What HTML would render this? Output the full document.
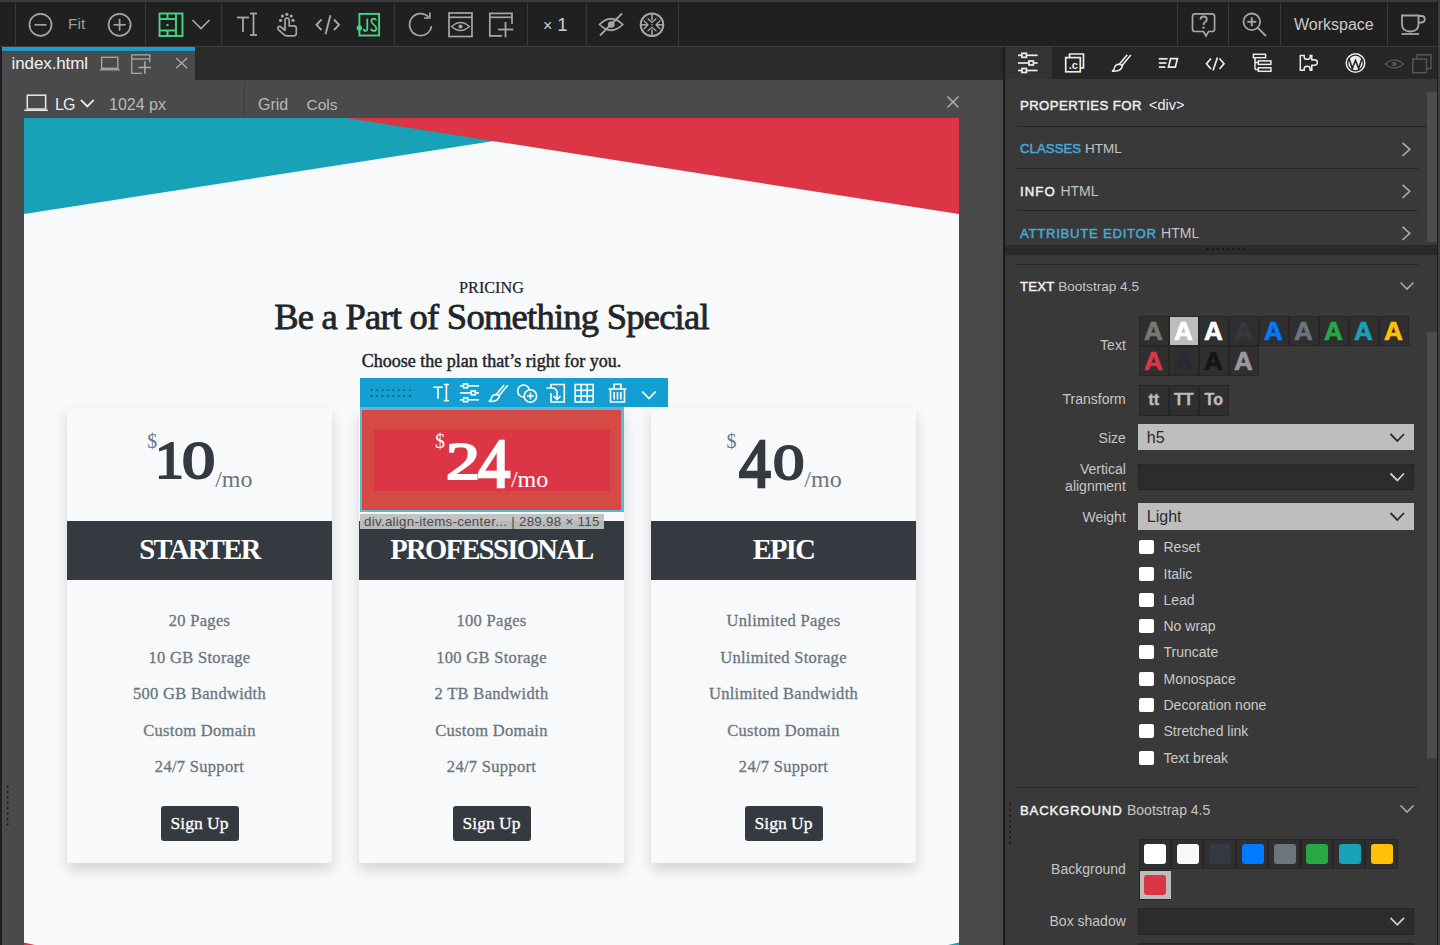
<!DOCTYPE html>
<html><head><meta charset="utf-8">
<style>
*{box-sizing:border-box;margin:0;padding:0}
html,body{width:1440px;height:945px;overflow:hidden;background:#1f1f1f;font-family:"Liberation Sans",sans-serif}
.a{position:absolute}
svg.a{overflow:visible}
#top{left:0;top:0;width:1440px;height:46px;background:#202020;border-top:2px solid #3a3a3a}
.sep{position:absolute;top:2px;width:1px;height:44px;background:#383838}
#topline{left:0;top:46px;width:1440px;height:1px;background:#3c3c3c}
#tabbar{left:2px;top:47px;width:1001px;height:33px;background:#2a2a2a}
#tab{left:2px;top:47px;width:193px;height:33px;background:#4a4a4a;border-top:4px solid #1b9ccf}
#chead{left:2px;top:80px;width:1001px;height:38px;background:#4a4a4a}
#cvbg{left:2px;top:118px;width:1001px;height:827px;background:#4a4a4a}
#canvas{left:24px;top:118px;width:935px;height:827px;background:#f8f9fa;overflow:hidden}
#divider{left:1003px;top:47px;width:2px;height:898px;background:#1a1a1a}
#rp{left:1005px;top:47px;width:435px;height:898px;background:#393939}
#rtabs{left:1005px;top:47px;width:435px;height:32px;background:#262626}

.card{width:265px;height:455px;background:#f8f9fa;border-radius:3px;box-shadow:0 7px 14px rgba(0,0,0,.15)}
.band{width:265px;height:59.5px;background:#343a40;color:#fff;font-family:"Liberation Serif",serif;font-weight:bold;font-size:28.5px;text-align:center;line-height:57px;letter-spacing:-1.6px}
.price{width:265px;height:80px;text-align:center;white-space:nowrap}
.price .dol{font-size:17px;vertical-align:top;position:relative;top:4px}
.price .num{font-size:52px;font-weight:bold;line-height:80px}
.price .mo{font-size:20px}
.feat{width:265px;text-align:center;font-size:16.5px;color:#6c757d;letter-spacing:0.3px;-webkit-text-stroke:0.3px #6c757d}
.btn{width:78px;height:35px;background:#343a40;border-radius:3px;color:#fff;font-size:17.5px;text-align:center;line-height:34px;-webkit-text-stroke:0.3px #fff}

.hd{font-size:13.2px;font-weight:normal;letter-spacing:1.05px;white-space:nowrap;line-height:16px;-webkit-text-stroke:0.45px currentColor;word-spacing:0px}
.hd .lt{font-weight:normal;color:#c4c4c4;letter-spacing:0;margin-left:0px;-webkit-text-stroke:0;font-size:14px}
.hr{left:1016.5px;height:1px;background:#262626}
.cell{width:28px;height:28px;font-weight:bold;font-size:26px;line-height:29px;text-align:center;-webkit-text-stroke:0.7px currentColor}
.tcell{width:28.5px;height:28.5px;background:#2f2f2f;color:#bcbcbc;font-weight:bold;font-size:16px;line-height:28px;text-align:center;-webkit-text-stroke:0.4px #bcbcbc}
.lbl{left:1005px;width:120.8px;text-align:right;font-size:14px;color:#c6c6c6;line-height:16px;margin-top:1px}
.sel{left:1138.3px;width:276px;height:26.4px;font-size:16px;line-height:28px;padding-left:8.5px}
.sel.lite{background:#bebebe;color:#2b2b2b}
.sel.dark{background:#2c2c2c;border:1px solid #252525}
.chk{left:1139px;width:14.6px;height:14px;background:#fff;border-radius:2px}
.clb{left:1163.5px;font-size:14px;color:#c9c9c9;line-height:16px;white-space:nowrap;margin-top:1px}
.dg{font-family:"Liberation Serif",serif;font-size:51.5px;line-height:60px;transform-origin:0 0}
.serif{font-family:"Liberation Serif",serif}
</style></head><body>
<div id="top" class="a"></div>
<div id="topline" class="a"></div>
<div class="a" style="left:0;top:0;width:1440px;height:46px">
<div class="sep" style="left:15px"></div>
<div class="sep" style="left:145px"></div>
<div class="sep" style="left:221px"></div>
<div class="sep" style="left:394px"></div>
<div class="sep" style="left:527px"></div>
<div class="sep" style="left:586px"></div>
<div class="sep" style="left:678px"></div>
<div class="sep" style="left:1177px"></div>
<div class="sep" style="left:1228px"></div>
<div class="sep" style="left:1280px"></div>
<div class="sep" style="left:1387px"></div>
<svg class="a" style="left:0;top:0" width="1440" height="46" fill="none" stroke="#a6a6a6" stroke-width="1.7">
  <circle cx="40.5" cy="24.8" r="11"/>
  <line x1="34.5" y1="24.8" x2="46.5" y2="24.8"/>
  <circle cx="119.6" cy="24.8" r="11"/>
  <line x1="113.6" y1="24.8" x2="125.6" y2="24.8"/>
  <line x1="119.6" y1="18.8" x2="119.6" y2="30.8"/>
  <g stroke="#47d684" stroke-width="1.9">
    <rect x="159.5" y="13.5" width="23" height="22.5"/>
    <line x1="159.5" y1="19" x2="176" y2="19"/>
    <line x1="159.5" y1="30.5" x2="176" y2="30.5"/>
    <line x1="176" y1="13.5" x2="176" y2="36"/>
    <line x1="167.5" y1="14" x2="167.5" y2="19"/>
    <line x1="167.5" y1="30.5" x2="167.5" y2="36"/>
  </g>
  <rect x="166.5" y="24" width="2" height="2" fill="#47d684" stroke="none"/>
  <polyline points="192.5,20 201,28.5 209.5,20"/>
  <g stroke-width="1.8">
  <line x1="237" y1="17.5" x2="249" y2="17.5"/><line x1="243" y1="17.5" x2="243" y2="32"/>
  <line x1="250" y1="13.5" x2="257" y2="13.5"/><line x1="250" y1="35" x2="257" y2="35"/><line x1="253.5" y1="13.5" x2="253.5" y2="35"/>
  </g>
  <path d="M285 31 L285 20.3 A2.1 2.1 0 0 1 289.2 20.3 L289.2 25.8 L294 25.8 Q296.3 25.8 296.3 28.2 L296.3 33.3 Q296.3 35.8 293.8 35.8 L286.8 35.8 Q285.2 35.8 284.2 34.9 L278.4 29.6 Q277.1 28.1 278.4 26.9 Q279.7 25.9 281.1 27 L285 30.5" stroke-width="1.7"/>
  <g fill="#a6a6a6" stroke="none"><circle cx="286.8" cy="14.3" r="1.6"/><circle cx="282.4" cy="16.1" r="1.6"/><circle cx="291.2" cy="16.1" r="1.6"/><circle cx="280.6" cy="20.4" r="1.6"/><circle cx="293" cy="20.4" r="1.6"/></g>
  <polyline points="321.5,19.5 316.5,24.8 321.5,30" stroke-width="1.9"/>
  <polyline points="334,19.5 339,24.8 334,30" stroke-width="1.9"/>
  <line x1="330.5" y1="15.2" x2="325.5" y2="34.2" stroke-width="1.9"/>
  <g stroke="#47d684" stroke-width="1.9">
    <rect x="359.4" y="13.9" width="19.7" height="21.6"/>
  </g>
  <circle cx="359.4" cy="28" r="2.7" fill="#47d684" stroke="none"/>
  <path d="M367.3 18.6 L367.3 28.2 Q367.3 30.9 365.3 30.9 Q363.9 30.9 363.7 28.8" stroke="#4fd68c" stroke-width="1.7"/>
  <path d="M376.2 20.4 Q375.6 18.6 373.7 18.6 Q371.4 18.6 371.4 21 Q371.4 23 373.7 24.6 Q376.3 26.4 376.3 28.4 Q376.3 30.9 373.8 30.9 Q371.5 30.9 371 28.8" stroke="#4fd68c" stroke-width="1.7"/>
  <path d="M431.5 26 A11 11 0 1 1 428.5 17" />
  <polyline points="429.8,12.5 429.8,18 424,18"/>
  <rect x="449" y="13" width="23" height="23.5"/>
  <line x1="449" y1="17.3" x2="472" y2="17.3"/>
  <path d="M451.7 26.5 Q460.5 18.5 469.3 26.5 Q460.5 34.5 451.7 26.5 Z" stroke-width="1.6"/>
  <circle cx="460.5" cy="26.5" r="2.1" fill="#a6a6a6" stroke="none"/>
  <path d="M502 35.8 L489.8 35.8 L489.8 13.3 L512 13.3 L512 24"/>
  <line x1="489.8" y1="17.3" x2="512" y2="17.3"/>
  <line x1="498" y1="29.5" x2="513.3" y2="29.5" stroke-width="1.8"/>
  <line x1="505.5" y1="22" x2="505.5" y2="37.2" stroke-width="1.8"/>
  <line x1="600" y1="35.5" x2="622" y2="13.5" stroke-width="1.8"/>
  <path d="M599.5 24.5 Q611 13 622.8 24.5 Q611 36 599.5 24.5 Z" stroke-width="1.7"/>
  <circle cx="611.3" cy="24.5" r="3.3" fill="#a6a6a6" stroke="none"/>
  <circle cx="652" cy="24.8" r="11.3" stroke-width="2"/>
  <g stroke-width="1.6">
   <line x1="652" y1="14" x2="652" y2="20"/><line x1="652" y1="35.6" x2="652" y2="29.6"/>
   <line x1="641.2" y1="24.8" x2="647.2" y2="24.8"/><line x1="662.8" y1="24.8" x2="656.8" y2="24.8"/>
  </g>
  <g fill="#a6a6a6" stroke="none">
   <path d="M647.6 17.6 L652 21.6 L656.4 17.6 L656.4 19.4 L652 23.2 L647.6 19.4 Z"/>
   <path d="M647.6 32 L652 28 L656.4 32 L656.4 30.2 L652 26.4 L647.6 30.2 Z"/>
   <path d="M644.8 20.4 L648.8 24.8 L644.8 29.2 L643 29.2 L646.8 24.8 L643 20.4 Z"/>
   <path d="M659.2 20.4 L655.2 24.8 L659.2 29.2 L661 29.2 L657.2 24.8 L661 20.4 Z"/>
  </g>
  <circle cx="652" cy="24.8" r="0.8" fill="#a6a6a6" stroke="none"/>
  <path d="M1195 13.8 L1212 13.8 Q1214.6 13.8 1214.6 16.5 L1214.6 29 Q1214.6 31.5 1212 31.5 L1208.5 31.5 L1206 36 L1203.5 31.5 L1195 31.5 Q1192.5 31.5 1192.5 29 L1192.5 16.5 Q1192.5 13.8 1195 13.8 Z" stroke-width="1.7"/>
  <path d="M1200.5 19.5 Q1200.5 16.5 1203.5 16.5 Q1206.8 16.5 1206.8 19.5 Q1206.8 21.5 1204.5 22.5 Q1203.5 23 1203.5 25" stroke-width="1.9"/>
  <circle cx="1203.5" cy="27.6" r="1.2" fill="#a6a6a6" stroke="none"/>
  <circle cx="1251.8" cy="21.8" r="8.3" stroke-width="1.8"/>
  <line x1="1257.8" y1="27.8" x2="1266" y2="36" stroke-width="1.9"/>
  <line x1="1247.3" y1="21.8" x2="1256.3" y2="21.8" stroke-width="1.9"/>
  <line x1="1251.8" y1="17.3" x2="1251.8" y2="26.3" stroke-width="1.9"/>
  <path d="M1402 15.5 L1418.5 15.5 L1418.5 24 Q1418.5 31.5 1410.3 31.5 Q1402 31.5 1402 24 Z" stroke-width="1.8"/>
  <path d="M1418.5 16 L1421.5 16 Q1424.8 16 1424.8 19.3 Q1424.8 22.5 1421.5 22.5 L1418.5 22.5" stroke-width="1.8"/>
  <line x1="1401.5" y1="34" x2="1419" y2="34" stroke-width="1.8"/>
</svg>
<div class="a" style="left:68px;top:15px;font-size:15.5px;color:#9d9d9d">Fit</div>
<div class="a" style="left:543px;top:14.5px;font-size:18.5px;color:#cfcfcf;white-space:nowrap;line-height:20px"><span style="font-size:16px;position:relative;top:0px">&#215;</span><span style="margin-left:5px">1</span></div>
<div class="a" style="left:1294px;top:15.5px;font-size:16px;color:#c9c9c9">Workspace</div>

</div>
<div id="tabbar" class="a"></div>
<div id="tab" class="a"></div>
<div id="chead" class="a"></div>
<div id="cvbg" class="a"></div>

<div class="a" style="left:11.5px;top:53.5px;font-size:17px;color:#f2f2f2;letter-spacing:-0.1px">index.html</div>
<svg class="a" style="left:0;top:46px" width="1003" height="72" fill="none" stroke="#a9a9a9" stroke-width="1.3">
  <rect x="101.6" y="11.3" width="16.2" height="11" />
  <line x1="100" y1="23.8" x2="119.7" y2="23.8"/>
  <path d="M142 27.3 L131.8 27.3 L131.8 8.8 L149.8 8.8 L149.8 16.5"/>
  <line x1="131.8" y1="13" x2="149.8" y2="13"/>
  <line x1="138.5" y1="21.5" x2="151" y2="21.5" stroke-width="1.6"/>
  <line x1="144.9" y1="15.2" x2="144.9" y2="27.8" stroke-width="1.6"/>
  <line x1="176" y1="12" x2="187.3" y2="22.2" stroke-width="1.4"/>
  <line x1="187.3" y1="12" x2="176" y2="22.2" stroke-width="1.4"/>
  <g stroke="#e8e8e8" stroke-width="1.5">
  <rect x="27.3" y="49.2" width="18.3" height="13.8"/>
  <line x1="24.3" y1="64.3" x2="47.9" y2="64.3"/>
  <polyline points="80.8,53.8 87.3,60.5 93.8,53.8" stroke-width="1.8"/>
  </g>
  <line x1="244.5" y1="36" x2="244.5" y2="71" stroke="#3b3b3b" stroke-width="1"/>
  <line x1="947.5" y1="50.5" x2="958.5" y2="61.5" stroke="#b0b0b0" stroke-width="1.4"/>
  <line x1="958.5" y1="50.5" x2="947.5" y2="61.5" stroke="#b0b0b0" stroke-width="1.4"/>
</svg>
<div class="a" style="left:55px;top:95.5px;font-size:16px;color:#ececec;letter-spacing:-0.8px">LG</div>
<div class="a" style="left:109px;top:95.5px;font-size:16px;color:#b9b9b9">1024 px</div>
<div class="a" style="left:258px;top:95.5px;font-size:16px;color:#b9b9b9">Grid</div>
<div class="a" style="left:306.5px;top:95.5px;font-size:15.5px;color:#b9b9b9">Cols</div>

<div id="canvas" class="a">
  <svg class="a" style="left:0;top:0" width="935" height="120">
    <polygon points="0,0 617,0 0,96" fill="#17a2b8"/>
    <polygon points="322,0 935,0 935,96" fill="#dc3545"/>
  </svg>
  <svg class="a" style="left:0;top:820px" width="935" height="7"><polygon points="0,4.5 11,7 0,7" fill="#dc3545"/><polygon points="935,4.5 924,7 935,7" fill="#17a2b8"/></svg>
</div>

<div class="a serif" style="left:24px;width:935px;top:278.5px;text-align:center;font-size:16.2px;color:#212529;-webkit-text-stroke:0.2px #212529">PRICING</div>
<div class="a serif" style="left:24px;width:935px;top:295px;text-align:center;font-size:36.5px;color:#212529;letter-spacing:-0.75px;-webkit-text-stroke:0.8px #212529">Be a Part of Something Special</div>
<div class="a serif" style="left:24px;width:935px;top:350.5px;text-align:center;font-size:18px;color:#212529;-webkit-text-stroke:0.45px #212529">Choose the plan that&#8217;s right for you.</div>
<div class="a card" style="left:67px;top:408px"></div>
<div class="a band" style="left:67px;top:520.5px">STARTER</div>
<div class="a feat serif" style="left:67px;top:610.0px;margin-top:1px">20 Pages</div>
<div class="a feat serif" style="left:67px;top:646.6px;margin-top:1px">10 GB Storage</div>
<div class="a feat serif" style="left:67px;top:683.2px;margin-top:1px">500 GB Bandwidth</div>
<div class="a feat serif" style="left:67px;top:719.8px;margin-top:1px">Custom Domain</div>
<div class="a feat serif" style="left:67px;top:756.4px;margin-top:1px">24/7 Support</div>
<div class="a btn serif" style="left:160.5px;top:806px">Sign Up</div>
<div class="a card" style="left:359px;top:408px"></div>
<div class="a band" style="left:359px;top:520.5px">PROFESSIONAL</div>
<div class="a feat serif" style="left:359px;top:610.0px;margin-top:1px">100 Pages</div>
<div class="a feat serif" style="left:359px;top:646.6px;margin-top:1px">100 GB Storage</div>
<div class="a feat serif" style="left:359px;top:683.2px;margin-top:1px">2 TB Bandwidth</div>
<div class="a feat serif" style="left:359px;top:719.8px;margin-top:1px">Custom Domain</div>
<div class="a feat serif" style="left:359px;top:756.4px;margin-top:1px">24/7 Support</div>
<div class="a btn serif" style="left:452.5px;top:806px">Sign Up</div>
<div class="a card" style="left:651px;top:408px"></div>
<div class="a band" style="left:651px;top:520.5px">EPIC</div>
<div class="a feat serif" style="left:651px;top:610.0px;margin-top:1px">Unlimited Pages</div>
<div class="a feat serif" style="left:651px;top:646.6px;margin-top:1px">Unlimited Storage</div>
<div class="a feat serif" style="left:651px;top:683.2px;margin-top:1px">Unlimited Bandwidth</div>
<div class="a feat serif" style="left:651px;top:719.8px;margin-top:1px">Custom Domain</div>
<div class="a feat serif" style="left:651px;top:756.4px;margin-top:1px">24/7 Support</div>
<div class="a btn serif" style="left:744.5px;top:806px">Sign Up</div>

<div class="a" style="left:359.5px;top:407px;width:264.5px;height:105px;background:#5cb6d6"></div>
<div class="a" style="left:362px;top:409.5px;width:259px;height:100.5px;background:#d64a45"></div>
<div class="a" style="left:374px;top:430px;width:235.8px;height:60.8px;background:#dc3545"></div>
<div class="a" style="left:359.5px;top:513.8px;width:244px;height:15.5px;background:rgba(192,192,192,.95);color:#4a4a4a;font-size:13.3px;line-height:15.5px;padding-left:4.5px;white-space:nowrap;letter-spacing:0.3px">div.align-items-center... | 289.98 &#215; 115</div>
<div class="a" style="left:359.5px;top:377.6px;width:308.5px;height:29.4px;background:#139fd1"></div>
<svg class="a" style="left:0;top:0" width="1000" height="600" fill="none" stroke="#fff" stroke-width="1.6">
  <g fill="#13608a" stroke="none">
  <circle cx="371.60" cy="390.3" r="1.05"/><circle cx="371.60" cy="395.9" r="1.05"/><circle cx="377.05" cy="390.3" r="1.05"/><circle cx="377.05" cy="395.9" r="1.05"/><circle cx="382.50" cy="390.3" r="1.05"/><circle cx="382.50" cy="395.9" r="1.05"/><circle cx="387.95" cy="390.3" r="1.05"/><circle cx="387.95" cy="395.9" r="1.05"/><circle cx="393.40" cy="390.3" r="1.05"/><circle cx="393.40" cy="395.9" r="1.05"/><circle cx="398.85" cy="390.3" r="1.05"/><circle cx="398.85" cy="395.9" r="1.05"/><circle cx="404.30" cy="390.3" r="1.05"/><circle cx="404.30" cy="395.9" r="1.05"/><circle cx="409.75" cy="390.3" r="1.05"/><circle cx="409.75" cy="395.9" r="1.05"/>
  </g>
  <line x1="433.3" y1="387.2" x2="442.8" y2="387.2"/><line x1="438" y1="387.2" x2="438" y2="398.7"/>
  <line x1="443.9" y1="384.5" x2="448.9" y2="384.5"/><line x1="443.9" y1="400.6" x2="448.9" y2="400.6"/><line x1="446.4" y1="384.5" x2="446.4" y2="400.6"/>
  <line x1="460" y1="385.9" x2="479" y2="385.9"/><line x1="460" y1="392.9" x2="479" y2="392.9"/><line x1="460" y1="399.8" x2="479" y2="399.8"/>
  <rect x="463.6" y="384" width="4" height="3.8" fill="#139fd1"/><rect x="471.3" y="391" width="4" height="3.8" fill="#139fd1"/><rect x="463.6" y="397.9" width="4" height="3.8" fill="#139fd1"/>
  <g transform="translate(-623.1 330.2)"><path d="M1130.8 55 L1122.3 65.2 M1127.3 54.8 L1119.3 64.3" stroke-width="1.6"/><path d="M1119.3 64.3 Q1123.5 65.5 1122.3 66.3 Q1121 70.8 1116.3 71 L1112 71.3 Q1114.5 69.8 1114.7 67.3 Q1115.2 64.5 1119.3 64.3 Z" stroke-width="1.6"/></g>
  <circle cx="523.6" cy="391" r="6"/>
  <circle cx="530.4" cy="396" r="6.2" fill="#139fd1"/>
  <line x1="527" y1="396" x2="533.8" y2="396"/><line x1="530.4" y1="392.6" x2="530.4" y2="399.4"/>
  <path d="M546.5 388 L552 388 Q557 388 557 393 L557 399 M553.5 396 L557 399.6 L560.5 396 M551 387.5 L551 384.5 L564.3 384.5 L564.3 402 L551 402 L551 393"/>
  <rect x="575.2" y="384.5" width="18" height="17.5"/>
  <line x1="581.2" y1="384.5" x2="581.2" y2="402"/><line x1="587.2" y1="384.5" x2="587.2" y2="402"/>
  <line x1="575.2" y1="390.3" x2="593.2" y2="390.3"/><line x1="575.2" y1="396.1" x2="593.2" y2="396.1"/>
  <path d="M608.5 389 L626.5 389 M610.5 389 L610.5 402 L624.5 402 L624.5 389 M614 385 L614 384.3 L621 384.3 L621 389 M614 384.3 L614 389 M614.2 392 L614.2 399.5 M617.5 392 L617.5 399.5 M620.8 392 L620.8 399.5"/>
  <polyline points="642.3,391.5 649,398.5 655.7,391.5" stroke-width="1.8"/>
</svg>
<div class="a serif" style="left:147.3px;top:429.5px;font-size:20px;color:#6c757d">$</div>
<div class="a serif" style="left:215.2px;top:465px;font-size:24px;color:#6c757d;line-height:28px">/mo</div>
<div class="a serif" style="left:435px;top:429.5px;font-size:20px;color:#fff">$</div>
<div class="a serif" style="left:510.9px;top:465px;font-size:24px;color:#fff;line-height:28px">/mo</div>
<div class="a serif" style="left:726.5px;top:429.5px;font-size:20px;color:#6c757d">$</div>
<div class="a serif" style="left:804.3px;top:465px;font-size:24px;color:#6c757d;line-height:28px">/mo</div>
<div class="a dg" style="left:155.2px;top:431.4px;color:#343a40;-webkit-text-stroke:2px #343a40;transform:scale(1.12,1.01)">1</div>
<div class="a dg" style="left:182.2px;top:431.4px;color:#343a40;-webkit-text-stroke:2px #343a40;transform:scale(1.29,1.01)">0</div>
<div class="a dg" style="left:446.1px;top:430.6px;color:#fff;-webkit-text-stroke:2px #fff;transform:scale(1.32,1.03)">2</div>
<div class="a dg" style="left:478.3px;top:423.9px;color:#fff;-webkit-text-stroke:2px #fff;transform:scale(1.25,1.35)">4</div>
<div class="a dg" style="left:739.2px;top:423.9px;color:#343a40;-webkit-text-stroke:2px #343a40;transform:scale(1.23,1.35)">4</div>
<div class="a dg" style="left:772.5px;top:431.7px;color:#343a40;-webkit-text-stroke:2px #343a40;transform:scale(1.22,0.995)">0</div>
<div id="divider" class="a"></div>
<div id="rp" class="a"></div>
<div id="rtabs" class="a"></div>

<div class="a" style="left:1005px;top:47px;width:46.5px;height:32px;background:#333"></div>
<svg class="a" style="left:0;top:0" width="1440" height="100" fill="none" stroke="#ececec" stroke-width="1.7">
  <line x1="1018" y1="55.3" x2="1037.6" y2="55.3"/><line x1="1018" y1="63" x2="1037.6" y2="63"/><line x1="1018" y1="70.5" x2="1037.6" y2="70.5"/>
  <rect x="1022" y="53.3" width="4.4" height="4" fill="#333"/><rect x="1029" y="61" width="4.4" height="4" fill="#333"/><rect x="1022" y="68.5" width="4.4" height="4" fill="#333"/>
  <path d="M1069.5 57.5 L1069.5 54 L1083.5 54 L1083.5 67.8 L1080.3 67.8"/>
  <rect x="1065.7" y="57.6" width="14.6" height="14.2"/>
  <text x="1068.8" y="69.3" fill="#ececec" stroke="none" style="font:bold 11px 'Liberation Sans',sans-serif">.c</text>
  <path d="M1130.8 55 L1122.3 65.2 M1127.3 54.8 L1119.3 64.3" stroke-width="1.6"/><path d="M1119.3 64.3 Q1123.5 65.5 1122.3 66.3 Q1121 70.8 1116.3 71 L1112 71.3 Q1114.5 69.8 1114.7 67.3 Q1115.2 64.5 1119.3 64.3 Z" stroke-width="1.6"/>
  <line x1="1158.8" y1="58.8" x2="1167.6" y2="58.8"/><line x1="1158.8" y1="63" x2="1166.4" y2="63"/><line x1="1158.8" y1="67.1" x2="1165.3" y2="67.1"/>
  <path d="M1170.6 58.7 L1177.4 58.7 L1175.3 67.1 L1168.5 67.1 Z"/>
  <polyline points="1211,58.5 1206.5,63.8 1211,69"/><polyline points="1219.5,58.5 1224,63.8 1219.5,69"/><line x1="1217.5" y1="57.5" x2="1213" y2="70.5"/>
  <rect x="1253.4" y="54.3" width="12.2" height="3.4" stroke-width="1.5"/>
  <path d="M1255 57.7 L1255 69.6 M1255 62.6 L1258.3 62.6 M1255 69.6 L1258.3 69.6" stroke-width="1.5"/>
  <rect x="1258.3" y="60.9" width="12.6" height="3.5" stroke-width="1.5"/><rect x="1258.3" y="67.8" width="12.6" height="3.5" stroke-width="1.5"/>
  <path d="M1300.3 55.5 L1304.2 55.5 L1304.2 57.2 Q1304.2 59.3 1307.2 59.3 Q1310.2 59.3 1310.2 57.2 L1310.2 55.5 L1311.8 55.5 L1311.8 59.9 Q1312.3 60 1314.2 59.8 Q1317.4 59.8 1317.4 62.5 Q1317.4 65.2 1314.2 65.2 L1311.8 65.2 L1311.8 70.3 L1310.2 70.3 L1310.2 68.7 Q1310.2 66.2 1307.2 66.2 Q1304.2 66.2 1304.2 68.7 L1304.2 70.3 L1300.3 70.3 Z" stroke-width="1.5"/>
  <circle cx="1355.5" cy="63" r="9.3" stroke-width="1.5"/>
  <circle cx="1355.5" cy="63" r="7.2" fill="#ececec" stroke="none"/>
  <path d="M1349 58.5 L1352.3 68.5 L1355.5 60.5 L1358.7 68.5 L1362 58.5" stroke="#262626" stroke-width="1.6"/>
  <path d="M1385.5 64 Q1394.3 56 1403.2 64 Q1394.3 72 1385.5 64 Z" stroke="#555" stroke-width="1.5"/>
  <circle cx="1394.3" cy="64" r="2.3" fill="#555" stroke="none"/>
  <path d="M1417 59 L1417 54.8 L1431 54.8 L1431 68.5 L1426.5 68.5" stroke="#555" stroke-width="1.5"/>
  <rect x="1412.8" y="59" width="13.7" height="13.7" stroke="#555" stroke-width="1.5"/>
</svg>
<div class="a hd" style="left:1020px;top:96.5px;color:#efefef;letter-spacing:0.4px">PROPERTIES FOR <span class="lt" style="letter-spacing:0;font-size:14.5px;margin-left:3px;color:#ededed">&lt;div&gt;</span></div>
<div class="a hr" style="top:126px;width:410px"></div>
<div class="a hd" style="left:1020px;top:141px;color:#4aa9d9;letter-spacing:0.05px">CLASSES <span class="lt" style="font-size:13.5px">HTML</span></div>
<div class="a hr" style="top:168px;width:401px"></div>
<div class="a hd" style="left:1020px;top:183px;color:#f2f2f2">INFO <span class="lt">HTML</span></div>
<div class="a hr" style="top:210px;width:401px"></div>
<div class="a" style="left:1005px;top:211px;width:422px;height:33.5px;overflow:hidden"><div class="a hd" style="left:15px;top:14px;color:#4aa9d9;letter-spacing:0.7px">ATTRIBUTE EDITOR <span class="lt">HTML</span></div></div>
<svg class="a" style="left:0;top:0" width="1440" height="945" fill="none" stroke="#a9a9a9" stroke-width="1.6">
  <polyline points="1402.5,142.8 1409.8,149.3 1402.5,155.8"/>
  <polyline points="1402.5,184.8 1409.8,191.3 1402.5,197.8"/>
  <polyline points="1402.5,226.8 1409.8,233.3 1402.5,239.8"/>
  <polyline points="1400.5,282.5 1407,289 1413.5,282.5"/>
  <polyline points="1400.5,805.5 1407,812 1413.5,805.5"/>
</svg>
<div class="a" style="left:1427px;top:92px;width:10px;height:150px;background:#4d4d4d"></div>
<div class="a" style="left:1005px;top:244.5px;width:432px;height:10px;background:#2a2a2a"></div>
<svg class="a" style="left:1205px;top:246px" width="45" height="6"><g fill="#111"><circle cx="2.5" cy="2.8" r="0.95"/><circle cx="7.7" cy="2.8" r="0.95"/><circle cx="12.9" cy="2.8" r="0.95"/><circle cx="18.1" cy="2.8" r="0.95"/><circle cx="23.3" cy="2.8" r="0.95"/><circle cx="28.5" cy="2.8" r="0.95"/><circle cx="33.7" cy="2.8" r="0.95"/><circle cx="38.9" cy="2.8" r="0.95"/></g></svg>
<div class="a hr" style="top:264px;width:401px"></div>
<div class="a hd" style="left:1020px;top:278.5px;color:#f2f2f2;letter-spacing:0.2px">TEXT <span class="lt" style="font-size:13.6px">Bootstrap 4.5</span></div>
<div class="a" style="left:1427px;top:332px;width:10px;height:426px;background:#4d4d4d"></div>
<div class="a" style="left:1138.5px;top:315.5px;width:270px;height:30px;background:#262626"></div>
<div class="a" style="left:1138.5px;top:345.5px;width:120px;height:30.5px;background:#262626"></div>
<div class="a cell" style="left:1139.5px;top:316.5px;background:#2f2f2f;color:#777">A</div>
<div class="a cell" style="left:1169.5px;top:316.5px;background:#bdbdbd;color:#fff">A</div>
<div class="a cell" style="left:1199.5px;top:316.5px;background:#2f2f2f;color:#fff">A</div>
<div class="a cell" style="left:1229.5px;top:316.5px;background:#2f2f2f;color:#343a40">A</div>
<div class="a cell" style="left:1259.5px;top:316.5px;background:#2f2f2f;color:#007bff">A</div>
<div class="a cell" style="left:1289.5px;top:316.5px;background:#2f2f2f;color:#6c757d">A</div>
<div class="a cell" style="left:1319.5px;top:316.5px;background:#2f2f2f;color:#28a745">A</div>
<div class="a cell" style="left:1349.5px;top:316.5px;background:#2f2f2f;color:#17a2b8">A</div>
<div class="a cell" style="left:1379.5px;top:316.5px;background:#2f2f2f;color:#ffc107">A</div>
<div class="a cell" style="left:1139.5px;top:346.5px;background:#2f2f2f;color:#dc3545">A</div>
<div class="a cell" style="left:1169.5px;top:346.5px;background:#2f2f2f;color:#262b33">A</div>
<div class="a cell" style="left:1199.5px;top:346.5px;background:#2f2f2f;color:#151515">A</div>
<div class="a cell" style="left:1229.5px;top:346.5px;background:#2f2f2f;color:#9a9a9a">A</div>

<div class="a lbl" style="top:336px">Text</div>
<div class="a lbl" style="top:390px">Transform</div>
<div class="a" style="left:1138.5px;top:385px;width:90.5px;height:30.5px;background:#262626"></div>
<div class="a tcell" style="left:1139.5px;top:386px">tt</div>
<div class="a tcell" style="left:1169.5px;top:386px">TT</div>
<div class="a tcell" style="left:1199.5px;top:386px">To</div>
<div class="a lbl" style="top:428.5px">Size</div>
<div class="a sel lite" style="top:424px">h5</div>
<div class="a lbl" style="top:460px;line-height:16.6px">Vertical<br>alignment</div>
<div class="a sel dark" style="top:464px"></div>
<div class="a lbl" style="top:507.5px">Weight</div>
<div class="a sel lite" style="top:503.3px">Light</div>
<svg class="a" style="left:0;top:0;z-index:5" width="1440" height="945" fill="none" stroke-width="1.8">
  <polyline points="1390.5,434 1397.3,441 1404,434" stroke="#2a2a2a"/>
  <polyline points="1390.5,473.5 1397.3,480.5 1404,473.5" stroke="#cfcfcf"/>
  <polyline points="1390.5,513 1397.3,520 1404,513" stroke="#2a2a2a"/>
  <polyline points="1390.5,917.8 1397.3,924.8 1404,917.8" stroke="#cfcfcf"/>
</svg>
<div class="a chk" style="top:540.2px"></div><div class="a clb" style="top:538.2px">Reset</div>
<div class="a chk" style="top:566.5px"></div><div class="a clb" style="top:564.5px">Italic</div>
<div class="a chk" style="top:592.8px"></div><div class="a clb" style="top:590.8px">Lead</div>
<div class="a chk" style="top:619.1px"></div><div class="a clb" style="top:617.1px">No wrap</div>
<div class="a chk" style="top:645.4px"></div><div class="a clb" style="top:643.4px">Truncate</div>
<div class="a chk" style="top:671.7px"></div><div class="a clb" style="top:669.7px">Monospace</div>
<div class="a chk" style="top:698.0px"></div><div class="a clb" style="top:696.0px">Decoration none</div>
<div class="a chk" style="top:724.3px"></div><div class="a clb" style="top:722.3px">Stretched link</div>
<div class="a chk" style="top:750.6px"></div><div class="a clb" style="top:748.6px">Text break</div>

<div class="a hr" style="top:787px;width:401px"></div>
<div class="a hd" style="left:1020px;top:801.5px;color:#f2f2f2;letter-spacing:0.8px">BACKGROUND <span class="lt">Bootstrap 4.5</span></div>
<svg class="a" style="left:1007px;top:802px" width="6" height="45"><g fill="#111"><circle cx="3" cy="2.5" r="0.95"/><circle cx="3" cy="8.0" r="0.95"/><circle cx="3" cy="13.5" r="0.95"/><circle cx="3" cy="19.0" r="0.95"/><circle cx="3" cy="24.5" r="0.95"/><circle cx="3" cy="30.0" r="0.95"/><circle cx="3" cy="35.5" r="0.95"/><circle cx="3" cy="41.0" r="0.95"/></g></svg>
<svg class="a" style="left:5px;top:784px" width="6" height="45"><g fill="#111"><circle cx="2.6" cy="2.6" r="0.95"/><circle cx="2.6" cy="8.0" r="0.95"/><circle cx="2.6" cy="13.4" r="0.95"/><circle cx="2.6" cy="18.8" r="0.95"/><circle cx="2.6" cy="24.2" r="0.95"/><circle cx="2.6" cy="29.6" r="0.95"/><circle cx="2.6" cy="35.0" r="0.95"/><circle cx="2.6" cy="40.4" r="0.95"/></g></svg>
<div class="a" style="left:1138.5px;top:838.5px;width:259.5px;height:30px;background:#262626"></div>
<div class="a" style="left:1139.5px;top:839.5px;width:30.4px;height:28px;background:#2f2f2f"></div><div class="a" style="left:1144.3px;top:844px;width:22px;height:20px;background:#fff;border-radius:3px"></div>
<div class="a" style="left:1171.9px;top:839.5px;width:30.4px;height:28px;background:#2f2f2f"></div><div class="a" style="left:1176.7px;top:844px;width:22px;height:20px;background:#f8f9fa;border-radius:3px"></div>
<div class="a" style="left:1204.3px;top:839.5px;width:30.4px;height:28px;background:#2f2f2f"></div><div class="a" style="left:1209.1px;top:844px;width:22px;height:20px;background:#343a40;border-radius:3px"></div>
<div class="a" style="left:1236.7px;top:839.5px;width:30.4px;height:28px;background:#2f2f2f"></div><div class="a" style="left:1241.5px;top:844px;width:22px;height:20px;background:#007bff;border-radius:3px"></div>
<div class="a" style="left:1269.1px;top:839.5px;width:30.4px;height:28px;background:#2f2f2f"></div><div class="a" style="left:1273.8999999999999px;top:844px;width:22px;height:20px;background:#6c757d;border-radius:3px"></div>
<div class="a" style="left:1301.5px;top:839.5px;width:30.4px;height:28px;background:#2f2f2f"></div><div class="a" style="left:1306.3px;top:844px;width:22px;height:20px;background:#28a745;border-radius:3px"></div>
<div class="a" style="left:1333.9px;top:839.5px;width:30.4px;height:28px;background:#2f2f2f"></div><div class="a" style="left:1338.7px;top:844px;width:22px;height:20px;background:#17a2b8;border-radius:3px"></div>
<div class="a" style="left:1366.3px;top:839.5px;width:30.4px;height:28px;background:#2f2f2f"></div><div class="a" style="left:1371.1px;top:844px;width:22px;height:20px;background:#ffc107;border-radius:3px"></div>

<div class="a" style="left:1138.5px;top:869.5px;width:32.8px;height:30px;background:#262626"></div>
<div class="a" style="left:1139.5px;top:870.5px;width:31px;height:28.5px;background:#bdbdbd"></div>
<div class="a" style="left:1144.3px;top:874.8px;width:22px;height:20px;background:#dc3545;border-radius:3px"></div>
<div class="a lbl" style="top:859.5px">Background</div>
<div class="a lbl" style="top:911.5px">Box shadow</div>
<div class="a sel dark" style="top:908.2px"></div>
<div class="a sel dark" style="top:943.3px"></div>

<div class="a" style="left:1437px;top:0px;width:1px;height:945px;background:#1c1c1c"></div><div class="a" style="left:1438px;top:0px;width:2px;height:945px;background:#3e3e3e"></div>
</body></html>
